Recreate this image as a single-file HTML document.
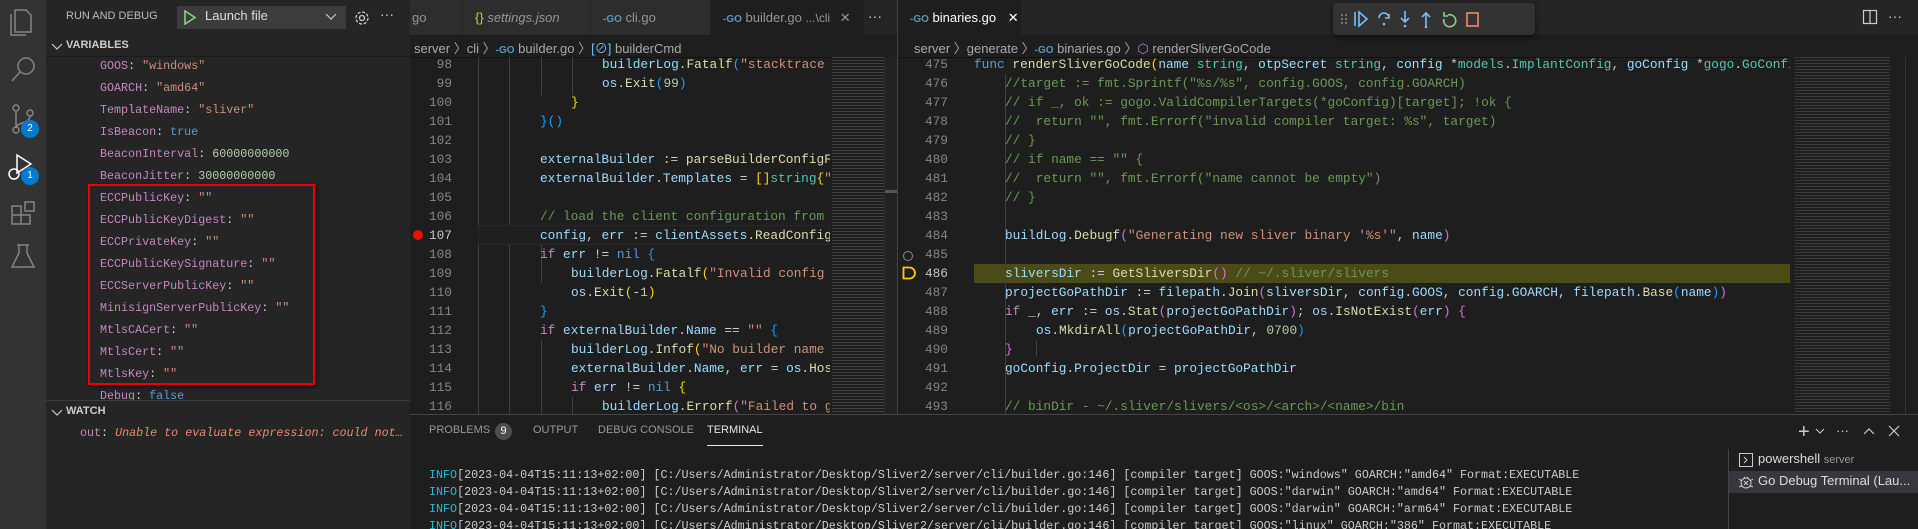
<!DOCTYPE html>
<html><head><meta charset="utf-8"><style>
*{margin:0;padding:0;box-sizing:border-box}
html{width:1918px;height:529px;overflow:hidden;background:#1e1e1e}
body{width:1918px;height:529px;overflow:hidden;background:#1e1e1e;position:relative;font-family:"Liberation Sans",sans-serif;color:#ccc}
.a{position:absolute}
.m{font-family:"Liberation Mono",monospace;white-space:pre}
.code{font-size:12.8px;line-height:19px;height:19px}
.ln{color:#858585;text-align:right;width:40px}
.k{color:#569cd6}.c{color:#c586c0}.f{color:#dcdcaa}.v{color:#9cdcfe}.s{color:#ce9178}.cm{color:#6a9955}.n{color:#b5cea8}.t{color:#4ec9b0}.w{color:#d4d4d4}
.b1{color:#ffd700}.b2{color:#da70d6}.b3{color:#179fff}
.var{font-size:11.7px;line-height:22px;height:22px;left:100px;color:#c586c0}
.tab{top:0;height:35px;font-size:13px;line-height:35px;padding-left:12px;color:#969696;white-space:nowrap;overflow:hidden}
.mini{background:repeating-linear-gradient(180deg,rgba(150,150,150,.35) 0 1px,transparent 1px 3px)}
.term{font-family:"Liberation Mono",monospace;white-space:nowrap;font-size:11.7px;line-height:17px;height:17px;color:#ccc;left:429px}
</style></head><body>
<!-- activity bar -->
<div class="a" style="left:0;top:0;width:46px;height:529px;background:#333"></div>
<svg class="a" style="left:0;top:0" width="46" height="280" fill="none" stroke="#858585" stroke-width="1.5">
<path d="M15 10h11l5 5v17H15z M11 14v21h15"/>
<circle cx="26" cy="66" r="8"/><path d="M20 72l-8 9"/>
<circle cx="16" cy="108" r="3"/><circle cx="16" cy="130" r="3"/><circle cx="30" cy="113" r="3"/><path d="M16 111v16 M30 116c0 8-14 6-14 12"/>
<path d="M17 155l14 9-14 9z" stroke="#fff"/><circle cx="14" cy="174" r="5" stroke="#fff"/>
<path d="M12 206h9v9h-9z M12 215h9v9h-9z M21 215h9v9h-9z M25 202h9v9h-9z"/>
<path d="M19 245v8l-7 14h22l-7-14v-8 M17 245h12"/>
</svg>
<div class="a" style="left:21px;top:120px;width:18px;height:18px;border-radius:9px;background:#007acc;color:#fff;font-size:10px;line-height:18px;text-align:center">2</div>
<div class="a" style="left:21px;top:167px;width:18px;height:18px;border-radius:9px;background:#007acc;color:#fff;font-size:10px;line-height:18px;text-align:center">1</div>
<!-- sidebar -->
<div class="a" style="left:46px;top:0;width:364px;height:529px;background:#252526"></div>
<div class="a" style="left:66px;top:10px;font-size:11px;color:#bbb">RUN AND DEBUG</div>
<div class="a" style="left:177px;top:6px;width:169px;height:23px;background:#3c3c3c"></div>
<svg class="a" style="left:183px;top:10px" width="14" height="15"><path d="M2 1l10 6.5L2 14z" fill="none" stroke="#89d185" stroke-width="1.6"/></svg>
<div class="a" style="left:205px;top:8px;font-size:13px;color:#ddd">Launch file</div>
<svg class="a" style="left:325px;top:13px" width="12" height="8"><path d="M1 1l5 5 5-5" fill="none" stroke="#ccc" stroke-width="1.2"/></svg>
<svg class="a" style="left:354px;top:10px" width="16" height="16" fill="none" stroke="#ccc" stroke-width="1.3"><circle cx="8" cy="8" r="2.5"/><circle cx="8" cy="8" r="6" stroke-dasharray="3 1.7"/></svg>
<div class="a" style="left:380px;top:6px;font-size:14px;color:#ccc">···</div>
<svg class="a" style="left:51px;top:42px" width="12" height="10"><path d="M1 2l5 5 5-5" fill="none" stroke="#ccc" stroke-width="1.2"/></svg>
<div class="a" style="left:66px;top:39px;font-size:11px;font-weight:bold;color:#ccc">VARIABLES</div>
<div class="a" style="left:46px;top:56px;width:364px;height:1px;background:#1a1a1a"></div>
<div class="a m var" style="top:55px">GOOS<span class="w">: </span><span class="s">"windows"</span></div>
<div class="a m var" style="top:77px">GOARCH<span class="w">: </span><span class="s">"amd64"</span></div>
<div class="a m var" style="top:99px">TemplateName<span class="w">: </span><span class="s">"sliver"</span></div>
<div class="a m var" style="top:121px">IsBeacon<span class="w">: </span><span class="k">true</span></div>
<div class="a m var" style="top:143px">BeaconInterval<span class="w">: </span><span class="n">60000000000</span></div>
<div class="a m var" style="top:165px">BeaconJitter<span class="w">: </span><span class="n">30000000000</span></div>
<div class="a m var" style="top:187px">ECCPublicKey<span class="w">: </span><span class="s">""</span></div>
<div class="a m var" style="top:209px">ECCPublicKeyDigest<span class="w">: </span><span class="s">""</span></div>
<div class="a m var" style="top:231px">ECCPrivateKey<span class="w">: </span><span class="s">""</span></div>
<div class="a m var" style="top:253px">ECCPublicKeySignature<span class="w">: </span><span class="s">""</span></div>
<div class="a m var" style="top:275px">ECCServerPublicKey<span class="w">: </span><span class="s">""</span></div>
<div class="a m var" style="top:297px">MinisignServerPublicKey<span class="w">: </span><span class="s">""</span></div>
<div class="a m var" style="top:319px">MtlsCACert<span class="w">: </span><span class="s">""</span></div>
<div class="a m var" style="top:341px">MtlsCert<span class="w">: </span><span class="s">""</span></div>
<div class="a m var" style="top:363px">MtlsKey<span class="w">: </span><span class="s">""</span></div>
<div class="a m var" style="top:385px;height:15px;overflow:hidden">Debug<span class="w">: </span><span class="k">false</span></div>
<div class="a" style="left:88px;top:184px;width:227px;height:201px;border:2.5px solid #e00;box-shadow:2px 2px 4px rgba(0,0,0,.6)"></div>
<div class="a" style="left:46px;top:400px;width:364px;height:1px;background:#3c3c3c"></div>
<svg class="a" style="left:51px;top:408px" width="12" height="10"><path d="M1 2l5 5 5-5" fill="none" stroke="#ccc" stroke-width="1.2"/></svg>
<div class="a" style="left:66px;top:405px;font-size:11px;font-weight:bold;color:#ccc">WATCH</div>
<div class="a m" style="left:80px;top:425px;font-size:11.7px;line-height:16px;color:#c586c0">out<span class="w">: </span><i style="color:#f48771">Unable to evaluate expression: could not…</i></div>

<!-- left editor group tabs -->
<div class="a" style="left:410px;top:0;width:488px;height:35px;background:#252526"></div>
<div class="a tab" style="left:410px;width:52px;background:#2d2d2d;padding-left:2px">go</div>
<div class="a tab" style="left:463px;width:127px;background:#2d2d2d"><span style="color:#cbcb41">{}</span> <i>settings.json</i></div>
<div class="a tab" style="left:591px;width:119px;background:#2d2d2d"><b style="color:#519aba;font-size:10px">-GO</b> cli.go</div>
<div class="a tab" style="left:711px;width:153px;background:#1e1e1e"><b style="color:#519aba;font-size:10px">-GO</b> builder.go <span style="font-size:12px">...\cli</span> <span style="margin-left:6px">✕</span></div>
<div class="a" style="left:868px;top:8px;font-size:14px;color:#ccc">···</div>
<div class="a" style="left:414px;top:38px;font-size:13px;color:#a9a9a9;white-space:nowrap">server 〉cli 〉<b style="color:#519aba;font-size:10px">-GO</b> builder.go 〉<span style="color:#75beff">[⊘]</span> builderCmd</div>
<div class="a" style="left:410px;top:57px;width:420px;height:1px;background:#111"></div>
<!-- left code -->
<div class="a" style="left:478px;top:57px;width:1px;height:357px;background:#404040"></div>
<div class="a" style="left:509px;top:57px;width:1px;height:357px;background:#404040"></div>
<div class="a" style="left:541px;top:57px;width:1px;height:38px;background:#404040"></div>
<div class="a" style="left:572px;top:57px;width:1px;height:38px;background:#404040"></div>
<div class="a" style="left:478px;top:225px;width:352px;height:20px;border:1px solid #282828;background:#1f1f1f"></div>
<div class="a" style="left:541px;top:245px;width:1px;height:38px;background:#404040"></div>
<div class="a" style="left:541px;top:340px;width:1px;height:74px;background:#404040"></div>
<div class="a" style="left:572px;top:397px;width:1px;height:17px;background:#404040"></div>
<div class="a" style="left:413px;top:230px;width:10px;height:10px;border-radius:5px;background:#e51400"></div>
<div class="a" style="left:410px;top:55px;width:420px;height:359px;overflow:hidden">
<div class="a m code ln" style="left:2px;top:0">98</div><div class="a m code" style="left:192px;top:0"><span class="v">builderLog</span>.<span class="f">Fatalf</span><span class="b3">(</span><span class="s">"stacktrace from panic: %s"</span></div>
<div class="a m code ln" style="left:2px;top:19px">99</div><div class="a m code" style="left:192px;top:19px"><span class="v">os</span>.<span class="f">Exit</span><span class="b3">(</span><span class="n">99</span><span class="b3">)</span></div>
<div class="a m code ln" style="left:2px;top:38px">100</div><div class="a m code b1" style="left:161px;top:38px">}</div>
<div class="a m code ln" style="left:2px;top:57px">101</div><div class="a m code b3" style="left:130px;top:57px">}()</div>
<div class="a m code ln" style="left:2px;top:76px">102</div>
<div class="a m code ln" style="left:2px;top:95px">103</div><div class="a m code" style="left:130px;top:95px"><span class="v">externalBuilder</span> := <span class="f">parseBuilderConfigFile</span><span class="b1">(</span></div>
<div class="a m code ln" style="left:2px;top:114px">104</div><div class="a m code" style="left:130px;top:114px"><span class="v">externalBuilder</span>.<span class="v">Templates</span> = <span class="b1">[]</span><span class="t">string</span><span class="b1">{</span><span class="s">"sliver"</span></div>
<div class="a m code ln" style="left:2px;top:133px">105</div>
<div class="a m code ln" style="left:2px;top:152px">106</div><div class="a m code cm" style="left:130px;top:152px">// load the client configuration from the</div>
<div class="a m code ln" style="left:2px;top:171px;color:#c6c6c6">107</div><div class="a m code" style="left:130px;top:171px"><span class="v">config</span>, <span class="v">err</span> := <span class="v">clientAssets</span>.<span class="f">ReadConfig</span><span class="b1">(</span></div>
<div class="a m code ln" style="left:2px;top:190px">108</div><div class="a m code" style="left:130px;top:190px"><span class="c">if</span> <span class="v">err</span> != <span class="k">nil</span> <span class="b3">{</span></div>
<div class="a m code ln" style="left:2px;top:209px">109</div><div class="a m code" style="left:161px;top:209px"><span class="v">builderLog</span>.<span class="f">Fatalf</span><span class="b1">(</span><span class="s">"Invalid config file"</span></div>
<div class="a m code ln" style="left:2px;top:228px">110</div><div class="a m code" style="left:161px;top:228px"><span class="v">os</span>.<span class="f">Exit</span><span class="b1">(</span><span class="w">-</span><span class="n">1</span><span class="b1">)</span></div>
<div class="a m code ln" style="left:2px;top:247px">111</div><div class="a m code b3" style="left:130px;top:247px">}</div>
<div class="a m code ln" style="left:2px;top:266px">112</div><div class="a m code" style="left:130px;top:266px"><span class="c">if</span> <span class="v">externalBuilder</span>.<span class="v">Name</span> == <span class="s">""</span> <span class="b3">{</span></div>
<div class="a m code ln" style="left:2px;top:285px">113</div><div class="a m code" style="left:161px;top:285px"><span class="v">builderLog</span>.<span class="f">Infof</span><span class="b1">(</span><span class="s">"No builder name was specified"</span></div>
<div class="a m code ln" style="left:2px;top:304px">114</div><div class="a m code" style="left:161px;top:304px"><span class="v">externalBuilder</span>.<span class="v">Name</span>, <span class="v">err</span> = <span class="v">os</span>.<span class="f">Hostname</span></div>
<div class="a m code ln" style="left:2px;top:323px">115</div><div class="a m code" style="left:161px;top:323px"><span class="c">if</span> <span class="v">err</span> != <span class="k">nil</span> <span class="b1">{</span></div>
<div class="a m code ln" style="left:2px;top:342px">116</div><div class="a m code" style="left:192px;top:342px"><span class="v">builderLog</span>.<span class="f">Errorf</span><span class="b2">(</span><span class="s">"Failed to get hostname"</span></div>
</div>
<div class="a mini" style="left:832px;top:57px;width:52px;height:357px;opacity:.8"></div>
<div class="a" style="left:884px;top:57px;width:14px;height:357px;background:#222;border-left:1px solid #2a2a2a"></div>
<div class="a" style="left:885px;top:190px;width:12px;height:3px;background:#555"></div>
<div class="a" style="left:897px;top:0;width:1px;height:414px;background:#444"></div>

<!-- right editor group -->
<div class="a" style="left:898px;top:0;width:1020px;height:35px;background:#252526"></div>
<div class="a tab" style="left:898px;width:123px;background:#1e1e1e;color:#fff"><b style="color:#519aba;font-size:10px">-GO</b> binaries.go <span style="margin-left:8px">✕</span></div>
<div class="a" style="left:1333px;top:3px;width:202px;height:32px;background:#333;border-radius:4px;box-shadow:0 2px 6px rgba(0,0,0,.6)"></div>
<svg class="a" style="left:1336px;top:6px" width="196" height="26" fill="none" stroke-width="1.6">
<g fill="#888" stroke="none"><circle cx="6" cy="9" r="1"/><circle cx="10" cy="9" r="1"/><circle cx="6" cy="13" r="1"/><circle cx="10" cy="13" r="1"/><circle cx="6" cy="17" r="1"/><circle cx="10" cy="17" r="1"/></g>
<path d="M19 6v14 M23 6l8 7-8 7z" stroke="#75beff"/>
<path d="M43 12a5 5 0 0 1 10 0 M53 8v4h-4" stroke="#75beff"/><circle cx="48" cy="18" r="1.3" fill="#75beff" stroke="none"/>
<path d="M69 5v11 M65 12l4 4 4-4" stroke="#75beff"/><circle cx="69" cy="20" r="1.3" fill="#75beff" stroke="none"/>
<path d="M90 20V8 M86 11l4-4 4 4" stroke="#75beff"/><circle cx="90" cy="21" r="1.3" fill="#75beff" stroke="none"/>
<path d="M112 9a6 6 0 1 1-4 4 M108 6v4h4" stroke="#89d185"/>
<rect x="131" y="7" width="11" height="13" stroke="#f48771"/>
</svg>
<svg class="a" style="left:1862px;top:9px" width="16" height="16" fill="none" stroke="#ccc" stroke-width="1.2"><rect x="1.5" y="1.5" width="13" height="13"/><path d="M8 1.5v13"/></svg>
<div class="a" style="left:1888px;top:8px;font-size:14px;color:#ccc">···</div>
<div class="a" style="left:914px;top:38px;font-size:13px;color:#a9a9a9;white-space:nowrap">server 〉generate 〉<b style="color:#519aba;font-size:10px">-GO</b> binaries.go 〉<span style="color:#b180d7">⬡</span> renderSliverGoCode</div>
<div class="a" style="left:898px;top:57px;width:892px;height:1px;background:#111"></div>
<div class="a" style="left:974px;top:264px;width:816px;height:19px;background:#4b4b18"></div>
<div class="a" style="left:1005px;top:74px;width:1px;height:340px;background:#404040"></div>
<div class="a" style="left:1036px;top:340px;width:1px;height:17px;background:#404040"></div>
<div class="a" style="left:903px;top:251px;width:10px;height:10px;border:1.5px solid #888;border-radius:5px"></div>
<svg class="a" style="left:902px;top:266px" width="14" height="14"><path d="M1.5 1.5h6a5.5 5.5 0 0 1 0 11h-6z" fill="none" stroke="#ffcc00" stroke-width="1.8"/></svg>
<div class="a" style="left:898px;top:55px;width:892px;height:359px;overflow:hidden">
<div class="a m code ln" style="left:10px;top:0">475</div><div class="a m code" style="left:76px;top:0"><span class="k">func</span> <span class="f">renderSliverGoCode</span><span class="b1">(</span><span class="v">name</span> <span class="t">string</span>, <span class="v">otpSecret</span> <span class="t">string</span>, <span class="v">config</span> *<span class="t">models</span>.<span class="t">ImplantConfig</span>, <span class="v">goConfig</span> *<span class="t">gogo</span>.<span class="t">GoConfig</span><span class="b1">)</span></div>
<div class="a m code ln" style="left:10px;top:19px">476</div><div class="a m code cm" style="left:107px;top:19px">//target := fmt.Sprintf("%s/%s", config.GOOS, config.GOARCH)</div>
<div class="a m code ln" style="left:10px;top:38px">477</div><div class="a m code cm" style="left:107px;top:38px">// if _, ok := gogo.ValidCompilerTargets(*goConfig)[target]; !ok {</div>
<div class="a m code ln" style="left:10px;top:57px">478</div><div class="a m code cm" style="left:107px;top:57px">//  return "", fmt.Errorf("invalid compiler target: %s", target)</div>
<div class="a m code ln" style="left:10px;top:76px">479</div><div class="a m code cm" style="left:107px;top:76px">// }</div>
<div class="a m code ln" style="left:10px;top:95px">480</div><div class="a m code cm" style="left:107px;top:95px">// if name == "" {</div>
<div class="a m code ln" style="left:10px;top:114px">481</div><div class="a m code cm" style="left:107px;top:114px">//  return "", fmt.Errorf("name cannot be empty")</div>
<div class="a m code ln" style="left:10px;top:133px">482</div><div class="a m code cm" style="left:107px;top:133px">// }</div>
<div class="a m code ln" style="left:10px;top:152px">483</div>
<div class="a m code ln" style="left:10px;top:171px">484</div><div class="a m code" style="left:107px;top:171px"><span class="v">buildLog</span>.<span class="f">Debugf</span><span class="b2">(</span><span class="s">"Generating new sliver binary '%s'"</span>, <span class="v">name</span><span class="b2">)</span></div>
<div class="a m code ln" style="left:10px;top:190px">485</div>
<div class="a m code ln" style="left:10px;top:209px;color:#c6c6c6">486</div><div class="a m code" style="left:107px;top:209px"><span class="v">sliversDir</span> := <span class="f">GetSliversDir</span><span class="b2">()</span> <span class="cm">// ~/.sliver/slivers</span></div>
<div class="a m code ln" style="left:10px;top:228px">487</div><div class="a m code" style="left:107px;top:228px"><span class="v">projectGoPathDir</span> := <span class="v">filepath</span>.<span class="f">Join</span><span class="b2">(</span><span class="v">sliversDir</span>, <span class="v">config</span>.<span class="v">GOOS</span>, <span class="v">config</span>.<span class="v">GOARCH</span>, <span class="v">filepath</span>.<span class="f">Base</span><span class="b3">(</span><span class="v">name</span><span class="b3">)</span><span class="b2">)</span></div>
<div class="a m code ln" style="left:10px;top:247px">488</div><div class="a m code" style="left:107px;top:247px"><span class="c">if</span> <span class="v">_</span>, <span class="v">err</span> := <span class="v">os</span>.<span class="f">Stat</span><span class="b2">(</span><span class="v">projectGoPathDir</span><span class="b2">)</span>; <span class="v">os</span>.<span class="f">IsNotExist</span><span class="b2">(</span><span class="v">err</span><span class="b2">)</span> <span class="b2">{</span></div>
<div class="a m code ln" style="left:10px;top:266px">489</div><div class="a m code" style="left:138px;top:266px"><span class="v">os</span>.<span class="f">MkdirAll</span><span class="b3">(</span><span class="v">projectGoPathDir</span>, <span class="n">0700</span><span class="b3">)</span></div>
<div class="a m code ln" style="left:10px;top:285px">490</div><div class="a m code b2" style="left:107px;top:285px">}</div>
<div class="a m code ln" style="left:10px;top:304px">491</div><div class="a m code" style="left:107px;top:304px"><span class="v">goConfig</span>.<span class="v">ProjectDir</span> = <span class="v">projectGoPathDir</span></div>
<div class="a m code ln" style="left:10px;top:323px">492</div>
<div class="a m code ln" style="left:10px;top:342px">493</div><div class="a m code cm" style="left:107px;top:342px">// binDir - ~/.sliver/slivers/&lt;os&gt;/&lt;arch&gt;/&lt;name&gt;/bin</div>
</div>
<div class="a mini" style="left:1795px;top:57px;width:95px;height:357px;opacity:.7"></div>
<div class="a" style="left:1905px;top:57px;width:1px;height:357px;background:#333"></div>

<!-- panel -->
<div class="a" style="left:410px;top:414px;width:1508px;height:1px;background:#444"></div>
<div class="a" style="left:429px;top:424px;font-size:11px;color:#999;white-space:nowrap">PROBLEMS</div>
<div class="a" style="left:495px;top:423px;width:17px;height:17px;border-radius:9px;background:#4d4d4d;color:#fff;font-size:11px;line-height:17px;text-align:center">9</div>
<div class="a" style="left:533px;top:424px;font-size:11px;color:#999">OUTPUT</div>
<div class="a" style="left:598px;top:424px;font-size:11px;color:#999">DEBUG CONSOLE</div>
<div class="a" style="left:707px;top:424px;font-size:11px;color:#e7e7e7">TERMINAL</div>
<div class="a" style="left:707px;top:445px;width:56px;height:1px;background:#e7e7e7"></div>
<div class="a" style="left:1798px;top:422px;font-size:20px;line-height:20px;color:#ccc">+</div>
<svg class="a" style="left:1815px;top:427px" width="10" height="8"><path d="M1 2l4 4 4-4" fill="none" stroke="#ccc"/></svg>
<div class="a" style="left:1836px;top:423px;font-size:13px;color:#ccc">···</div>
<svg class="a" style="left:1862px;top:426px" width="14" height="10"><path d="M2 8l5-5 5 5" fill="none" stroke="#ccc" stroke-width="1.2"/></svg>
<svg class="a" style="left:1888px;top:425px" width="12" height="12"><path d="M1 1l10 10M11 1L1 11" fill="none" stroke="#ccc" stroke-width="1.2"/></svg>
<div class="a term" style="top:467px"><span style="color:#29b8db">INFO</span>[2023-04-04T15:11:13+02:00] [C:/Users/Administrator/Desktop/Sliver2/server/cli/builder.go:146] [compiler target] GOOS:"windows" GOARCH:"amd64" Format:EXECUTABLE</div>
<div class="a term" style="top:484px"><span style="color:#29b8db">INFO</span>[2023-04-04T15:11:13+02:00] [C:/Users/Administrator/Desktop/Sliver2/server/cli/builder.go:146] [compiler target] GOOS:"darwin" GOARCH:"amd64" Format:EXECUTABLE</div>
<div class="a term" style="top:501px"><span style="color:#29b8db">INFO</span>[2023-04-04T15:11:13+02:00] [C:/Users/Administrator/Desktop/Sliver2/server/cli/builder.go:146] [compiler target] GOOS:"darwin" GOARCH:"arm64" Format:EXECUTABLE</div>
<div class="a term" style="top:518px"><span style="color:#29b8db">INFO</span>[2023-04-04T15:11:13+02:00] [C:/Users/Administrator/Desktop/Sliver2/server/cli/builder.go:146] [compiler target] GOOS:"linux" GOARCH:"386" Format:EXECUTABLE</div>
<div class="a" style="left:1728px;top:449px;width:1px;height:80px;background:#444"></div>
<div class="a" style="left:1729px;top:471px;width:189px;height:22px;background:#37373d"></div>
<svg class="a" style="left:1738px;top:452px" width="16" height="16" fill="none" stroke="#ccc"><rect x="1.5" y="1.5" width="13" height="13"/><path d="M6 5l3 3-3 3"/></svg>
<div class="a" style="left:1758px;top:451px;font-size:13px;color:#ddd;white-space:nowrap">powershell <span style="font-size:11px;color:#999">server</span></div>
<svg class="a" style="left:1738px;top:474px" width="16" height="16" fill="none" stroke="#ccc"><circle cx="8" cy="9" r="5"/><path d="M6 7l4 4M10 7l-4 4M1 5l3 2M15 5l-3 2M1 13l3-1M15 13l-3-1M6 3l1 1M10 3l-1 1"/></svg>
<div class="a" style="left:1758px;top:473px;font-size:13px;color:#ddd;white-space:nowrap">Go Debug Terminal (Lau...</div>
</body></html>
